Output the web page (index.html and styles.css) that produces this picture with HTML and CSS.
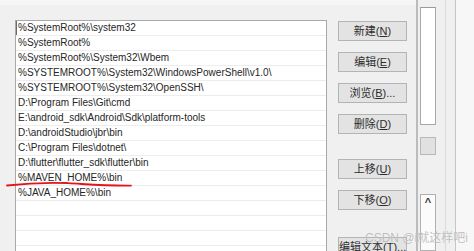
FILE: index.html
```html
<!DOCTYPE html>
<html lang="zh-CN">
<head>
<meta charset="utf-8">
<title>编辑环境变量</title>
<link rel="stylesheet" href="styles.css">
</head>
<body>
<div class="screen">
  <div class="dialog">
    <div class="topband"></div>
    <div class="content">
      <div class="listbox">
        <div class="row focus">%SystemRoot%\system32</div>
        <div class="row">%SystemRoot%</div>
        <div class="row">%SystemRoot%\System32\Wbem</div>
        <div class="row">%SYSTEMROOT%\System32\WindowsPowerShell\v1.0\</div>
        <div class="row">%SYSTEMROOT%\System32\OpenSSH\</div>
        <div class="row">D:\Program Files\Git\cmd</div>
        <div class="row">E:\android_sdk\Android\Sdk\platform-tools</div>
        <div class="row">D:\androidStudio\jbr\bin</div>
        <div class="row">C:\Program Files\dotnet\</div>
        <div class="row">D:\flutter\flutter_sdk\flutter\bin</div>
        <div class="row">%MAVEN_HOME%\bin</div>
        <div class="row">%JAVA_HOME%\bin</div>
        <div class="row"></div>
        <div class="row"></div>
        <div class="row"></div>
      </div>
      <div class="buttons">
        <div class="btn">新建(<u>N</u>)</div>
        <div class="btn">编辑(<u>E</u>)</div>
        <div class="btn">浏览(<u>B</u>)...</div>
        <div class="btn">删除(<u>D</u>)</div>
        <div class="btn gap-lg">上移(<u>U</u>)</div>
        <div class="btn">下移(<u>O</u>)</div>
        <div class="btn gap-xl">编辑文本(<u>T</u>)...</div>
      </div>
    </div>
  </div>
  <div class="bgwin">
    <div class="bgcol">
      <div class="bg-list"></div>
      <div class="bg-btn"></div>
      <div class="bg-combo"><span class="caret">^</span></div>
    </div>
    <div class="bg-gap"></div>
    <div class="bg-gap line"></div>
    <div class="bg-rest"></div>
  </div>
  <svg class="scribble" width="474" height="251" viewBox="0 0 474 251">
    <path d="M7 185.5 C 25 183.5, 50 182.5, 68 183.2 C 85 184, 100 185.8, 131 185.6" fill="none" stroke="#e3151b" stroke-width="1.8" stroke-linecap="round"/>
  </svg>
  <div class="watermark">CSDN @i就这样吧i</div>
</div>
</body>
</html>
```

FILE: styles.css
```css
html, body {
  margin: 0;
  padding: 0;
}
body {
  width: 474px;
  height: 251px;
  overflow: hidden;
  font-family: "Liberation Sans", "Noto Sans CJK SC", sans-serif;
  font-size: 10px;
  color: #1a1a1a;
}
.screen {
  position: relative;
  display: flex;
  width: 474px;
  height: 251px;
  overflow: hidden;
}
.dialog {
  width: 416px;
  flex: none;
  background: #f0f0f0;
  border-right: 2px solid #bcbcbc;
  display: flex;
  flex-direction: column;
}
.topband {
  height: 5px;
  background: #f6f6f6;
  flex: none;
}
.content {
  display: flex;
  padding: 15px 0 0 15px;
  align-items: flex-start;
}
.listbox {
  width: 310px;
  height: 260px;
  border: 1px solid #a9a9a9;
  border-bottom: none;
  background: #fff;
  overflow: hidden;
  flex: none;
}
.row {
  height: 14px;
  line-height: 14px;
  border-bottom: 1px solid #ededed;
  padding-left: 2px;
  white-space: nowrap;
  font-size: 10px;
  color: #262626;
}
.row.focus {
  box-shadow: inset 1px 0 0 #6a6a6a;
}
.buttons {
  margin-left: 11px;
  display: flex;
  flex-direction: column;
  gap: 11px;
  padding-top: 1px;
}
.btn {
  width: 67px;
  height: 18px;
  border: 1px solid #b4b4b4;
  background: #e3e3e3;
  text-align: center;
  line-height: 18px;
  font-size: 11px;
  color: #2e2e2e;
  white-space: nowrap;
}
.btn u {
  text-underline-offset: 1px;
}
.btn.gap-lg {
  margin-top: 14px;
}
.btn.gap-xl {
  margin-top: 16px;
}
.bgwin {
  flex: 1;
  display: flex;
  background: #f0f0f0;
}
.bgcol {
  margin-left: 2px;
  width: 16px;
  display: flex;
  flex-direction: column;
  flex: none;
}
.bg-list {
  margin-top: 7px;
  height: 127px;
  border: 1px solid #a8a8a8;
  border-top-color: #9a9a9a;
  background: #fff;
}
.bg-btn {
  margin-top: 12px;
  height: 18px;
  border: 1px solid #b8b8b8;
  background: #e1e1e1;
}
.bg-combo {
  margin-top: 39px;
  height: 60px;
  border: 1px solid #b0b0b0;
  background: #fbfbfb;
  display: flex;
  justify-content: center;
}
.caret {
  font-size: 11px;
  line-height: 14px;
  color: #333;
  font-weight: bold;
}
.bg-gap {
  width: 9px;
  flex: none;
}
.bg-gap.line {
  border-left: 1px solid #dadada;
}
.bg-rest {
  flex: 1;
  border-left: 1px solid #c6c6c6;
  background: #f7f7f7;
}
.scribble {
  position: absolute;
  left: 0;
  top: 0;
  pointer-events: none;
}
.watermark {
  position: absolute;
  left: 365px;
  top: 231px;
  font-size: 12px;
  line-height: 14px;
  color: rgba(150, 150, 150, 0.6);
  white-space: nowrap;
  text-shadow: 0 0 1px rgba(255,255,255,0.7);
}
```
